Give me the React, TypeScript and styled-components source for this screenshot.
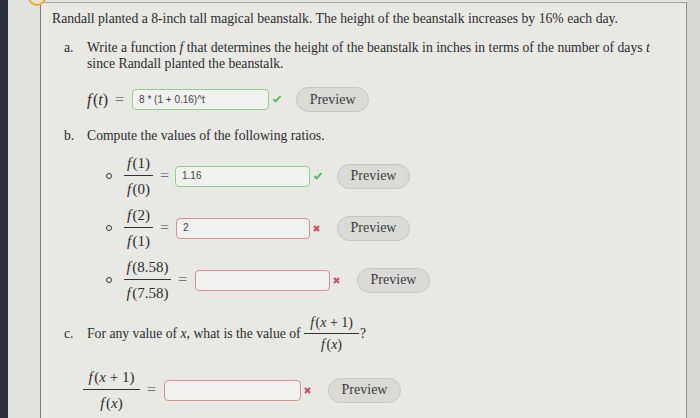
import React, { FC } from 'react';
import styled, { createGlobalStyle } from 'styled-components';

const GlobalStyle = createGlobalStyle`
  html, body {
    margin: 0;
    padding: 0;
    background: #e3e3e0;
  }
  body {
    font-family: "Liberation Serif", "Times New Roman", serif;
    color: #2c2c2c;
  }
`;

const StyledPage = styled.div`
  display: flex;
  height: 418px;
  overflow: hidden;
`;

const StyledDarkEdge = styled.div`
  width: 8px;
  background: #2c313c;
`;

const StyledGutter = styled.div`
  position: relative;
  width: 32px;
  background: #e1e1de;
`;

const StyledBadge = styled.div`
  position: absolute;
  left: 20px;
  top: -12px;
  width: 14px;
  height: 14px;
  border-radius: 50%;
  border: 2px solid #e0a94a;
  background: #efe3c6;
`;

const StyledPanel = styled.div`
  flex: 1;
  margin-top: 2px;
  border-left: 1px solid #7c7c7c;
  border-top: 1px solid #a4a4a4;
  border-right: 1px solid #8e8e8e;
  background: #e8e8e5;
  padding: 8px 0 0 11px;
`;

const StyledRightEdge = styled.div`
  width: 13px;
  background: #d8d8d4;
`;

const StyledIntro = styled.p`
  margin: 0;
  font-size: 13.7px;
  line-height: 16px;
`;

const StyledPart = styled.div<{ $top: number }>`
  display: grid;
  grid-template-columns: 23px 1fr;
  margin: ${(p) => p.$top}px 0 0 12px;
  font-size: 13.7px;
  line-height: 16px;
`;

const StyledLetter = styled.span<{ $center?: boolean }>`
  align-self: ${(p) => (p.$center ? 'center' : 'start')};
`;

const StyledBody = styled.div`
  width: 572px;
`;

const StyledRow = styled.div<{ $top: number; $indent?: number }>`
  display: flex;
  align-items: center;
  margin-top: ${(p) => p.$top}px;
  margin-left: ${(p) => p.$indent || 0}px;
`;

const StyledMath = styled.span`
  font-size: 16px;
  white-space: nowrap;
`;

const StyledVar = styled.i`
  font-style: italic;
`;

const StyledFn = styled.i`
  font-style: italic;
  margin-right: 1.5px;
`;

const StyledEquals = styled.span<{ $gap: number }>`
  margin: 0 ${(p) => p.$gap}px 0 7px;
  font-size: 16px;
  color: #777;
`;

const StyledBullet = styled.span`
  width: 4px;
  height: 4px;
  border: 1.3px solid #333;
  border-radius: 50%;
  margin: 0 12px 0 19px;
`;

const StyledFraction = styled.span<{ $width: number; $compact?: boolean }>`
  display: inline-flex;
  flex-direction: column;
  align-items: center;
  width: ${(p) => p.$width}px;
  vertical-align: middle;
  font-size: ${(p) => (p.$compact ? 14 : 15)}px;
  line-height: ${(p) => (p.$compact ? 16 : 20)}px;
  white-space: nowrap;
`;

const StyledNum = styled.span`
  width: 100%;
  text-align: center;
  border-bottom: 1px solid #333;
  padding-bottom: 2px;
`;

const StyledDen = styled.span`
  padding-top: 3px;
`;

const StyledInput = styled.div<{ $state: 'ok' | 'bad'; $width: number }>`
  box-sizing: border-box;
  width: ${(p) => p.$width}px;
  height: 21px;
  border: 1.5px solid ${(p) => (p.$state === 'ok' ? '#8fcf8a' : '#e08d94')};
  border-radius: 4px;
  background: #f1f1ef;
  padding: 0 6px;
  display: flex;
  align-items: center;
  font-family: "Liberation Sans", Arial, sans-serif;
  font-size: 10px;
  color: #444;
`;

const StyledMark = styled.span`
  display: inline-flex;
  width: 18px;
  padding-left: 3px;
  box-sizing: border-box;
  justify-content: flex-start;
`;

const StyledPreview = styled.button<{ $gap: number }>`
  margin-left: ${(p) => p.$gap}px;
  width: 73px;
  height: 25px;
  border-radius: 13px;
  border: 1px solid #c6c6c3;
  background: #dadad7;
  font-family: "Liberation Serif", "Times New Roman", serif;
  font-size: 14px;
  color: #3c3c3c;
  padding: 0;
`;

const StyledQuestion = styled.p`
  margin: 0;
  display: flex;
  align-items: center;
`;

const StyledAfter = styled.span`
  margin-left: 1px;
`;

const Check: FC = () => (
  <svg width="10" height="9" viewBox="0 0 10 9">
    <path d="M0.8 4.9 L3.8 7.8 L9.2 1.5 L7.7 0.4 L3.7 5.1 L2.3 3.5 Z" fill="#58b75a" />
  </svg>
);

const Cross: FC = () => (
  <svg width="7" height="7" viewBox="0 0 7 7">
    <path d="M1 1 L6 6 M6 1 L1 6" stroke="#d9485c" strokeWidth="2" />
  </svg>
);

type AnswerProps = {
  value?: string;
  state: 'ok' | 'bad';
  width: number;
  gap: number;
};

const Answer: FC<AnswerProps> = ({ value, state, width, gap }) => (
  <>
    <StyledInput $state={state} $width={width}>
      {value}
    </StyledInput>
    <StyledMark>{state === 'ok' ? <Check /> : <Cross />}</StyledMark>
    <StyledPreview $gap={gap}>Preview</StyledPreview>
  </>
);

const F: FC<{ arg: React.ReactNode }> = ({ arg }) => (
  <span>
    <StyledFn>f</StyledFn>({arg})
  </span>
);

const XPlusOne: FC = () => (
  <>
    <StyledVar>x</StyledVar> + 1
  </>
);

const App: FC = () => (
  <StyledPage>
    <GlobalStyle />
    <StyledDarkEdge />
    <StyledGutter>
      <StyledBadge />
    </StyledGutter>
    <StyledPanel>
      <StyledIntro>
        Randall planted a 8-inch tall magical beanstalk. The height of the beanstalk increases by 16% each day.
      </StyledIntro>

      <StyledPart $top={13}>
        <StyledLetter>a.</StyledLetter>
        <StyledBody>
          Write a function <StyledVar>f</StyledVar> that determines the height of the beanstalk in inches in
          terms of the number of days <StyledVar>t</StyledVar> since Randall planted the beanstalk.
          <StyledRow $top={15}>
            <StyledMath>
              <F arg={<StyledVar>t</StyledVar>} />
            </StyledMath>
            <StyledEquals $gap={8}>=</StyledEquals>
            <Answer value="8 * (1 + 0.16)^t" state="ok" width={137} gap={9} />
          </StyledRow>
        </StyledBody>
      </StyledPart>

      <StyledPart $top={16}>
        <StyledLetter>b.</StyledLetter>
        <StyledBody>
          Compute the values of the following ratios.
          <StyledRow $top={9}>
            <StyledBullet />
            <StyledFraction $width={29}>
              <StyledNum>
                <F arg="1" />
              </StyledNum>
              <StyledDen>
                <F arg="0" />
              </StyledDen>
            </StyledFraction>
            <StyledEquals $gap={6}>=</StyledEquals>
            <Answer value="1.16" state="ok" width={135} gap={9} />
          </StyledRow>
          <StyledRow $top={6}>
            <StyledBullet />
            <StyledFraction $width={29}>
              <StyledNum>
                <F arg="2" />
              </StyledNum>
              <StyledDen>
                <F arg="1" />
              </StyledDen>
            </StyledFraction>
            <StyledEquals $gap={7}>=</StyledEquals>
            <Answer value="2" state="bad" width={134} gap={9} />
          </StyledRow>
          <StyledRow $top={6}>
            <StyledBullet />
            <StyledFraction $width={47}>
              <StyledNum>
                <F arg="8.58" />
              </StyledNum>
              <StyledDen>
                <F arg="7.58" />
              </StyledDen>
            </StyledFraction>
            <StyledEquals $gap={8}>=</StyledEquals>
            <Answer state="bad" width={135} gap={9} />
          </StyledRow>
        </StyledBody>
      </StyledPart>

      <StyledPart $top={12}>
        <StyledLetter $center>c.</StyledLetter>
        <StyledQuestion>
          For any value of&nbsp;<StyledVar>x</StyledVar>, what is the value of&nbsp;
          <StyledFraction $width={55} $compact>
            <StyledNum>
              <F arg={<XPlusOne />} />
            </StyledNum>
            <StyledDen>
              <F arg={<StyledVar>x</StyledVar>} />
            </StyledDen>
          </StyledFraction>
          <StyledAfter>?</StyledAfter>
        </StyledQuestion>
      </StyledPart>

      <StyledRow $top={14} $indent={31}>
        <StyledFraction $width={57}>
          <StyledNum>
            <F arg={<XPlusOne />} />
          </StyledNum>
          <StyledDen>
            <F arg={<StyledVar>x</StyledVar>} />
          </StyledDen>
        </StyledFraction>
        <StyledEquals $gap={8}>=</StyledEquals>
        <Answer state="bad" width={137} gap={9} />
      </StyledRow>
    </StyledPanel>
    <StyledRightEdge />
  </StyledPage>
);

export default App;
